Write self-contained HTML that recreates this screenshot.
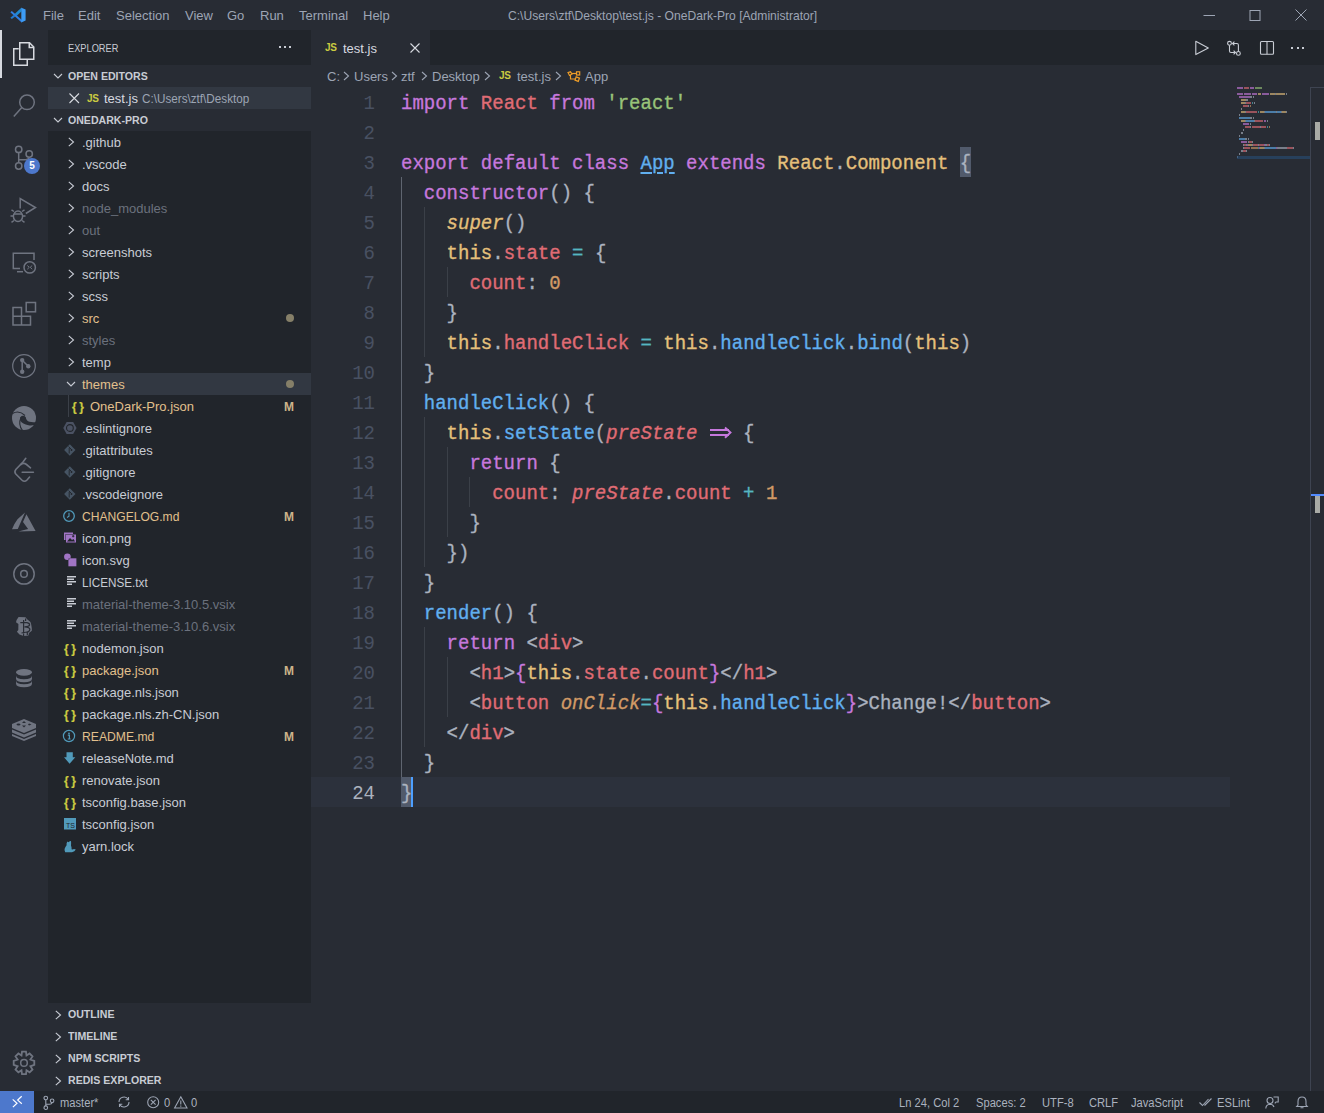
<!DOCTYPE html>
<html><head><meta charset="utf-8">
<style>
*{margin:0;padding:0;box-sizing:border-box}
html,body{width:1324px;height:1113px;overflow:hidden;background:#282c34;font-family:"Liberation Sans",sans-serif;position:relative}
.a{position:absolute}
svg{position:absolute;overflow:visible}
#title{left:0;top:0;width:1324px;height:30px;background:#282c34;color:#9da5b4;font-size:13px}
#title .m{position:absolute;top:1px;line-height:30px;white-space:nowrap}
#act{left:0;top:30px;width:48px;height:1061px;background:#282c34}
#side{left:48px;top:30px;width:263px;height:1061px;background:#21252b;color:#c8ccd4;font-size:13px;overflow:hidden}
#editor{left:311px;top:30px;width:1013px;height:1061px;background:#282c34;overflow:hidden}
#status{left:0;top:1091px;width:1324px;height:22px;background:#21252b;color:#abb2bf;font-size:12px}
#status .t{position:absolute;top:1px;transform:scaleX(0.93);transform-origin:0 0;line-height:22px;white-space:nowrap}
.row{position:absolute;left:0;width:263px;height:22px;line-height:22px;white-space:nowrap}
.row .t{position:absolute;top:1px}
.sh{position:absolute;left:0;width:263px;height:22px;line-height:22px;background:#282c34;font-weight:bold;font-size:11px;color:#c8ccd4;white-space:nowrap}
.sh .t{position:absolute;left:20px;top:0px;font-size:11.5px;transform:scaleX(0.92);transform-origin:0 0}
#code{position:absolute;left:90px;top:57px;width:830px;height:1004px}
.cl{position:absolute;left:0;height:30px;font-family:"Liberation Mono",monospace;font-size:20.5px;line-height:30px;white-space:pre;color:#abb2bf;-webkit-text-stroke:0.35px currentColor;transform:scaleX(0.92683);transform-origin:0 0}
.ln{position:absolute;left:0;width:64px;height:30px;text-align:right;font-family:"Liberation Mono",monospace;font-size:20.5px;line-height:30px;color:#495162;transform:scaleX(0.92683);transform-origin:100% 0}
.k{color:#c678dd}.r{color:#e06c75}.g{color:#98c379}.y{color:#e5c07b}.b{color:#61afef}.c{color:#56b6c2}.o{color:#d19a66}
.yi{color:#e5c07b;font-style:italic}.ri{color:#e06c75;font-style:italic}.oi{color:#d19a66;font-style:italic}
.bu{color:#61afef;text-decoration:underline;text-underline-offset:3px}
.bm{}
.bm2{}
.guide{position:absolute;width:1px;background:#3b4048}
.mm{position:absolute;height:2px}
.js{color:#cbcb41;font-weight:bold;font-size:10px;letter-spacing:-0.3px}
.brace{color:#cbcb41;font-weight:bold;font-size:12px;letter-spacing:2.5px;-webkit-text-stroke:0.2px #cbcb41}
.mm2{font-weight:bold;font-size:12px;color:#cdb48a}
.bc span{top:1px}
</style></head><body>
<div id="title" class="a">
  <svg style="left:10px;top:7px" width="16" height="16" viewBox="0 0 16 16">
    <path d="M11.6 0.6 L4.6 7.1 L6.6 8.9 L11.6 4.3 Z" fill="#1f8ad2"/>
    <path d="M0.4 5.3 L1.8 4.1 L12.2 13.2 L11.6 15.4 Z" fill="#2f80e6"/>
    <path d="M0.4 10.7 L3.6 8.1 L5.2 9.5 L1.8 11.9 Z" fill="#1f7bd0"/>
    <path d="M11.3 0.7 L15.6 2.6 L15.6 13.4 L11.3 15.4 Z" fill="#3d9cf5"/>
  </svg>
  <span class="m" style="left:43px">File</span>
  <span class="m" style="left:78px">Edit</span>
  <span class="m" style="left:116px">Selection</span>
  <span class="m" style="left:185px">View</span>
  <span class="m" style="left:227px">Go</span>
  <span class="m" style="left:260px">Run</span>
  <span class="m" style="left:299px">Terminal</span>
  <span class="m" style="left:363px">Help</span>
  <span class="m" id="ttl" style="left:508px;font-size:12.1px">C:\Users\ztf\Desktop\test.js - OneDark-Pro [Administrator]</span>
  <svg style="left:1203px;top:10px" width="12" height="12" viewBox="0 0 12 12"><path d="M0.5 5.5 H12" stroke="#9da5b4" stroke-width="1"/></svg>
  <svg style="left:1249px;top:10px" width="12" height="12" viewBox="0 0 12 12"><rect x="1" y="0.5" width="10" height="10" fill="none" stroke="#9da5b4" stroke-width="1"/></svg>
  <svg style="left:1295px;top:9px" width="12" height="12" viewBox="0 0 12 12"><path d="M0.5 0.5 L11.5 11.5 M11.5 0.5 L0.5 11.5" stroke="#9da5b4" stroke-width="1"/></svg>
</div>
<div id="act" class="a">
  <div class="a" style="left:0;top:0;width:2px;height:48px;background:#d7dae0"></div>
  <svg style="left:0;top:0" width="48" height="1061" viewBox="0 30 48 1061" fill="none" stroke="#6f7480" stroke-width="1.5">
    <!-- explorer -->
    <g stroke="#d7dae0">
      <path d="M18.75 48.75 H13.75 V65.25 H27.25 V59.75"/>
      <path d="M19.75 42.75 H29.5 L33.75 47 V59.25 H19.75 Z"/>
      <path d="M29.25 42.75 V47.5 H33.75"/>
    </g>
    <!-- search -->
    <circle cx="27" cy="102.3" r="7.3"/>
    <path d="M21.8 107.6 L13.8 116.6"/>
    <!-- scm -->
    <circle cx="18.7" cy="149.4" r="3.2"/>
    <circle cx="29.2" cy="154" r="3.2"/>
    <circle cx="18.7" cy="166" r="3.2"/>
    <path d="M18.7 152.6 V162.8 M29.2 157.2 Q29 159.5 24 159.7 H18.7"/>
    <!-- debug -->
    <path d="M20.2 208.5 V198.5 L35.5 207.5 L25.8 213.5"/>
    <ellipse cx="18" cy="216.3" rx="4.6" ry="5.2"/>
    <path d="M13.4 216 H10.5 M22.6 216 H25.5 M14 211.5 L11.5 209.8 M22 211.5 L24.5 209.8 M14 220.5 L11.5 222.3 M22 220.5 L24.5 222.3 M14 214 H22"/>
    <!-- remote -->
    <path d="M20 268.5 H13.3 V253.3 H34 V260"/>
    <path d="M17 271.7 H23"/>
    <circle cx="29.7" cy="267.4" r="5.7"/>
    <path d="M27.3 265.5 L29.3 267.3 L27.3 269.2 M32.2 265.5 L30.2 267.3 L32.2 269.2" stroke-width="1"/>
    <!-- extensions -->
    <path d="M13 307.5 H21.5 V325 H13 Z M13 316.3 H30.5 V325 H21.5"/>
    <rect x="26.2" y="302.5" width="9.3" height="9.3"/>
    <!-- git graph -->
    <circle cx="24" cy="366" r="11.3" stroke-width="1.2"/>
    <path d="M22.2 360.2 V371.7 M22.2 360.2 L28.3 366.3"/>
    <g fill="#6f7480" stroke="none"><circle cx="22.2" cy="360.1" r="2.2"/><circle cx="28.3" cy="366.3" r="2.2"/><circle cx="22.2" cy="371.7" r="2.2"/></g>
    <!-- edge -->
    <circle cx="24" cy="418" r="12" fill="#6f7480" stroke="none"/>
    <path fill="#282c34" stroke="none" d="M20.2 417.2 Q23 414.5 25.8 417.2 Q26.3 420.8 29.5 421.8 Q32.5 422.6 36.5 422 L36.5 424 Q33.5 426 28.5 425.3 Q22.5 424.3 20.2 420.5 Z"/>
    <path stroke="#282c34" stroke-width="1.1" d="M12.5 413.5 Q19 409.8 25 415.5 M21 417.5 Q17.8 424.5 22.5 430.5"/>
    <path fill="#282c34" stroke="none" d="M37 422 L37 427 Q35.5 424.8 33.5 424.4 Z"/>
    <!-- leetcode -->
    <path stroke-width="1.6" stroke-linecap="round" d="M25.8 458.3 L23.2 461.8 L15.8 469.5 Q14 471.8 15.8 474 L21.8 480 Q24.5 482.5 27 480 L29.6 477"/>
    <path stroke-width="1.6" stroke-linecap="round" d="M20.8 464.6 Q23.6 462.2 26.5 464.5 L30.5 467.8"/>
    <path stroke-width="1.6" stroke-linecap="round" d="M22.2 472.3 H33.4"/>
    <!-- azure -->
    <path fill="#6f7480" stroke="none" d="M25 512.6 L17.8 529 L12 529.3 Q14.5 523 17.5 519.2 Z M26.4 514.3 L35.6 531 L18.4 531.6 L23 530.2 L28.1 529 L23 522.1 Z"/>
    <!-- circle -->
    <circle cx="24" cy="573.9" r="10.2"/>
    <circle cx="24" cy="573.9" r="3.3"/>
    <!-- bitcoin -->
    <path fill="#6f7480" stroke="none" d="M18.6 616.9 L25.5 617.3 L27.4 619.4 Q30.5 621 31.2 624.5 L31.8 628.4 L31.8 630.7 L29 633 L28.4 635.5 L23.8 636 L19.5 634.4 L16.9 631.8 L18.3 630 L18.4 624 L16 622.2 L16.6 620 Z"/>
    <path stroke="#282c34" stroke-width="1.2" fill="none" d="M23.6 620 V636 M25.6 618.5 V621 M27.3 632 V635 M20.3 622.6 H27 Q29.8 623.2 29.6 625 Q29.2 626.6 24.5 626.8 Q30 627.2 29.9 629.3 Q29.5 631.8 27 632 L21.5 633"/>
    <!-- database -->
    <g fill="#6f7480" stroke="none">
      <ellipse cx="24" cy="672.3" rx="8" ry="3.4"/>
      <path d="M16 675.5 Q16 679.3 24 679.3 Q32 679.3 32 675.5 V678.5 Q32 682.3 24 682.3 Q16 682.3 16 678.5 Z"/>
      <path d="M16 680.5 Q16 684.3 24 684.3 Q32 684.3 32 680.5 V683.5 Q32 687.3 24 687.3 Q16 687.3 16 683.5 Z"/>
    </g>
    <!-- redis -->
    <g fill="#6f7480" stroke="none">
      <path d="M24 719 L36 724 V728 L24 733 L12 728 V724 Z"/>
      <path d="M12 729.5 L24 734.5 L36 729.5 V732.5 L24 737.5 L12 732.5 Z"/>
      <path d="M12 734 L24 739 L36 734 V736 L24 741 L12 736 Z"/>
    </g>
    <g fill="#282c34" stroke="none"><path d="M24 721 L26 723 H22 Z M24 727.5 L22 725.5 H26 Z"/><ellipse cx="18.5" cy="724.5" rx="2" ry="1"/><path d="M29 723.5 L31.5 724.5 L29 725.5 L28 724.5 Z"/></g>
    <!-- settings gear -->
    <path stroke-width="1.8" d="M22 1051.6 H26 L26.5 1055.5 L29.6 1053.5 L32.5 1056.4 L30.4 1059.5 L34.3 1060.9 V1064.9 L30.4 1066.3 L32.5 1069.5 L29.6 1072.3 L26.5 1070.3 L26 1074.2 H22 L21.5 1070.3 L18.4 1072.3 L15.5 1069.5 L17.6 1066.3 L13.7 1064.9 V1060.9 L17.6 1059.5 L15.5 1056.4 L18.4 1053.5 L21.5 1055.5 Z"/>
    <circle cx="24" cy="1062.9" r="3.3" stroke-width="1.5"/>
  </svg>
  <div class="a" style="left:24px;top:128px;width:16px;height:16px;border-radius:8px;background:#4d78cc;color:#fff;font-size:10px;font-weight:bold;line-height:16px;text-align:center">5</div>
</div>
<div id="side" class="a">
  <div class="a" style="left:0;top:0;width:263px;height:35px;background:#21252b"></div>
  <span class="a" style="left:20px;top:1px;line-height:35px;font-size:11px;color:#c8ccd4;transform:scaleX(0.84);transform-origin:0 0">EXPLORER</span>
  <div class="a" style="left:231px;top:16px;width:2px;height:2px;background:#c8ccd4"></div><div class="a" style="left:236px;top:16px;width:2px;height:2px;background:#c8ccd4"></div><div class="a" style="left:241px;top:16px;width:2px;height:2px;background:#c8ccd4"></div>
  <div class="sh" style="top:35px"><span class="t">OPEN EDITORS</span></div>
  <svg style="left:5px;top:41px" width="10" height="10" viewBox="0 0 10 10"><path d="M1 3 L5 7 L9 3" fill="none" stroke="#c8ccd4" stroke-width="1.1"/></svg>
  <div class="a" style="left:0;top:57px;width:263px;height:22px;background:#323842"></div>
  <svg style="left:21px;top:63px" width="11" height="11" viewBox="0 0 11 11"><path d="M0.5 0.5 L10 10 M10 0.5 L0.5 10" stroke="#d7dae0" stroke-width="1.1"/></svg>
  <div class="row" style="top:57px;color:#d7dae0"><span class="t js" style="left:39px">JS</span><span class="t" style="left:56px">test.js</span><span class="t" style="left:94px;font-size:12px;color:#9da5b4;transform:scaleX(0.975);transform-origin:0 0">C:\Users\ztf\Desktop</span></div>
  <div class="sh" style="top:79px"><span class="t">ONEDARK-PRO</span></div>
  <svg style="left:5px;top:85px" width="10" height="10" viewBox="0 0 10 10"><path d="M1 3 L5 7 L9 3" fill="none" stroke="#c8ccd4" stroke-width="1.1"/></svg>
  <svg style="left:20px;top:107px" width="10" height="10" viewBox="0 0 10 10"><path d="M0.8 0.8 L5.5 5 L0.8 9.2" fill="none" stroke="#c8ccd4" stroke-width="1.1"/></svg>
  <div class="row" style="top:101px;color:#c8ccd4"><span class="t" style="left:34px">.github</span></div>
  <svg style="left:20px;top:129px" width="10" height="10" viewBox="0 0 10 10"><path d="M0.8 0.8 L5.5 5 L0.8 9.2" fill="none" stroke="#c8ccd4" stroke-width="1.1"/></svg>
  <div class="row" style="top:123px;color:#c8ccd4"><span class="t" style="left:34px">.vscode</span></div>
  <svg style="left:20px;top:151px" width="10" height="10" viewBox="0 0 10 10"><path d="M0.8 0.8 L5.5 5 L0.8 9.2" fill="none" stroke="#c8ccd4" stroke-width="1.1"/></svg>
  <div class="row" style="top:145px;color:#c8ccd4"><span class="t" style="left:34px">docs</span></div>
  <svg style="left:20px;top:173px" width="10" height="10" viewBox="0 0 10 10"><path d="M0.8 0.8 L5.5 5 L0.8 9.2" fill="none" stroke="#c8ccd4" stroke-width="1.1"/></svg>
  <div class="row" style="top:167px;color:#6b717d"><span class="t" style="left:34px">node_modules</span></div>
  <svg style="left:20px;top:195px" width="10" height="10" viewBox="0 0 10 10"><path d="M0.8 0.8 L5.5 5 L0.8 9.2" fill="none" stroke="#c8ccd4" stroke-width="1.1"/></svg>
  <div class="row" style="top:189px;color:#6b717d"><span class="t" style="left:34px">out</span></div>
  <svg style="left:20px;top:217px" width="10" height="10" viewBox="0 0 10 10"><path d="M0.8 0.8 L5.5 5 L0.8 9.2" fill="none" stroke="#c8ccd4" stroke-width="1.1"/></svg>
  <div class="row" style="top:211px;color:#c8ccd4"><span class="t" style="left:34px">screenshots</span></div>
  <svg style="left:20px;top:239px" width="10" height="10" viewBox="0 0 10 10"><path d="M0.8 0.8 L5.5 5 L0.8 9.2" fill="none" stroke="#c8ccd4" stroke-width="1.1"/></svg>
  <div class="row" style="top:233px;color:#c8ccd4"><span class="t" style="left:34px">scripts</span></div>
  <svg style="left:20px;top:261px" width="10" height="10" viewBox="0 0 10 10"><path d="M0.8 0.8 L5.5 5 L0.8 9.2" fill="none" stroke="#c8ccd4" stroke-width="1.1"/></svg>
  <div class="row" style="top:255px;color:#c8ccd4"><span class="t" style="left:34px">scss</span></div>
  <svg style="left:20px;top:283px" width="10" height="10" viewBox="0 0 10 10"><path d="M0.8 0.8 L5.5 5 L0.8 9.2" fill="none" stroke="#c8ccd4" stroke-width="1.1"/></svg>
  <div class="row" style="top:277px;color:#e2c08d"><span class="t" style="left:34px">src</span></div>
  <div class="a" style="left:238px;top:284px;width:8px;height:8px;border-radius:4px;background:#857f68"></div>
  <svg style="left:20px;top:305px" width="10" height="10" viewBox="0 0 10 10"><path d="M0.8 0.8 L5.5 5 L0.8 9.2" fill="none" stroke="#c8ccd4" stroke-width="1.1"/></svg>
  <div class="row" style="top:299px;color:#6b717d"><span class="t" style="left:34px">styles</span></div>
  <svg style="left:20px;top:327px" width="10" height="10" viewBox="0 0 10 10"><path d="M0.8 0.8 L5.5 5 L0.8 9.2" fill="none" stroke="#c8ccd4" stroke-width="1.1"/></svg>
  <div class="row" style="top:321px;color:#c8ccd4"><span class="t" style="left:34px">temp</span></div>
  <div class="a" style="left:0;top:343px;width:263px;height:22px;background:#323842"></div>
  <svg style="left:18px;top:349px" width="10" height="10" viewBox="0 0 10 10"><path d="M1 3 L5 7 L9 3" fill="none" stroke="#c8ccd4" stroke-width="1.1"/></svg>
  <div class="row" style="top:343px;color:#e2c08d"><span class="t" style="left:34px">themes</span></div>
  <div class="a" style="left:238px;top:350px;width:8px;height:8px;border-radius:4px;background:#857f68"></div>
  <div class="a" style="left:20px;top:365px;width:1px;height:22px;background:#3b4048"></div>
  <div class="row" style="top:365px;color:#e2c08d"><span class="t brace" style="left:24px">{}</span><span class="t" style="left:42px">OneDark-Pro.json</span><span class="t mm2" style="left:236px">M</span></div>
  <svg style="left:14px;top:391px" width="16" height="14" viewBox="0 0 16 14"><path d="M1.25 7 L4.6 1.1 H11.2 L14.55 7 L11.2 12.9 H4.6 Z" fill="#4b5263"/><circle cx="7.9" cy="7" r="3.4" fill="none" stroke="#21252b" stroke-width="1.1"/></svg>
  <div class="row" style="top:387px;color:#c8ccd4"><span class="t" style="left:34px">.eslintignore</span></div>
  <svg style="left:14px;top:413px" width="16" height="14" viewBox="0 0 16 14"><path d="M7.8 1.3 L13.5 7 L7.8 12.7 L2.1 7 Z" fill="#465463"/><path d="M6.5 3.5 L9.2 6.2 M7.2 5 V10.5" stroke="#21252b" stroke-width="0.9" fill="none"/><circle cx="9.5" cy="7" r="0.9" fill="#21252b"/></svg>
  <div class="row" style="top:409px;color:#c8ccd4"><span class="t" style="left:34px">.gitattributes</span></div>
  <svg style="left:14px;top:435px" width="16" height="14" viewBox="0 0 16 14"><path d="M7.8 1.3 L13.5 7 L7.8 12.7 L2.1 7 Z" fill="#465463"/><path d="M6.5 3.5 L9.2 6.2 M7.2 5 V10.5" stroke="#21252b" stroke-width="0.9" fill="none"/><circle cx="9.5" cy="7" r="0.9" fill="#21252b"/></svg>
  <div class="row" style="top:431px;color:#c8ccd4"><span class="t" style="left:34px">.gitignore</span></div>
  <svg style="left:14px;top:457px" width="16" height="14" viewBox="0 0 16 14"><path d="M7.8 1.3 L13.5 7 L7.8 12.7 L2.1 7 Z" fill="#465463"/><path d="M6.5 3.5 L9.2 6.2 M7.2 5 V10.5" stroke="#21252b" stroke-width="0.9" fill="none"/><circle cx="9.5" cy="7" r="0.9" fill="#21252b"/></svg>
  <div class="row" style="top:453px;color:#c8ccd4"><span class="t" style="left:34px">.vscodeignore</span></div>
  <svg style="left:14px;top:479px" width="14" height="14" viewBox="0 0 14 14"><circle cx="7" cy="7" r="5.3" fill="none" stroke="#519aba" stroke-width="1.3"/><path d="M7 3.8 V7.3 L5 8.5" fill="none" stroke="#519aba" stroke-width="1.1"/></svg>
  <div class="row" style="top:475px;color:#e2c08d"><span class="t" style="left:34px;transform:scaleX(0.93);transform-origin:0 0">CHANGELOG.md</span><span class="t mm2" style="left:236px">M</span></div>
  <svg style="left:15px;top:501px" width="14" height="14" viewBox="0 0 14 14"><path d="M1 1.5 H10 V3 H2.5 V9 H1 Z" fill="#a074c4"/><rect x="3" y="3.5" width="10" height="8" fill="#a074c4"/><path d="M4 10.5 L7 7 L9 9 L10.5 8 L12 10.5 Z" fill="#21252b"/><path d="M10.2 4 V6.4 M9 5.2 H11.4" stroke="#21252b" stroke-width="0.9"/></svg>
  <div class="row" style="top:497px;color:#c8ccd4"><span class="t" style="left:34px">icon.png</span></div>
  <svg style="left:15px;top:523px" width="14" height="14" viewBox="0 0 14 14"><circle cx="4.4" cy="3.8" r="3.3" fill="#a074c4"/><rect x="5.4" y="5.3" width="8" height="8" fill="#a074c4"/><path d="M5.4 5.3 H7.2 A3.3 3.3 0 0 1 5.4 7.3 Z" fill="#21252b" opacity="0.5"/></svg>
  <div class="row" style="top:519px;color:#c8ccd4"><span class="t" style="left:34px">icon.svg</span></div>
  <svg style="left:18px;top:545px" width="12" height="12" viewBox="0 0 12 12"><path d="M1 1.8 H10 M1 4.3 H8 M1 6.8 H10 M1 9.3 H6" stroke="#c8ccd4" stroke-width="1.5"/></svg>
  <div class="row" style="top:541px;color:#c8ccd4"><span class="t" style="left:34px;transform:scaleX(0.9);transform-origin:0 0">LICENSE.txt</span></div>
  <svg style="left:18px;top:567px" width="12" height="12" viewBox="0 0 12 12"><path d="M1 1.8 H10 M1 4.3 H8 M1 6.8 H10 M1 9.3 H6" stroke="#c8ccd4" stroke-width="1.5"/></svg>
  <div class="row" style="top:563px;color:#6b717d"><span class="t" style="left:34px">material-theme-3.10.5.vsix</span></div>
  <svg style="left:18px;top:589px" width="12" height="12" viewBox="0 0 12 12"><path d="M1 1.8 H10 M1 4.3 H8 M1 6.8 H10 M1 9.3 H6" stroke="#c8ccd4" stroke-width="1.5"/></svg>
  <div class="row" style="top:585px;color:#6b717d"><span class="t" style="left:34px">material-theme-3.10.6.vsix</span></div>
  <div class="row" style="top:607px;color:#c8ccd4"><span class="t brace" style="left:16px">{}</span><span class="t" style="left:34px">nodemon.json</span></div>
  <div class="row" style="top:629px;color:#e2c08d"><span class="t brace" style="left:16px">{}</span><span class="t" style="left:34px">package.json</span><span class="t mm2" style="left:236px">M</span></div>
  <div class="row" style="top:651px;color:#c8ccd4"><span class="t brace" style="left:16px">{}</span><span class="t" style="left:34px">package.nls.json</span></div>
  <div class="row" style="top:673px;color:#c8ccd4"><span class="t brace" style="left:16px">{}</span><span class="t" style="left:34px">package.nls.zh-CN.json</span></div>
  <svg style="left:14px;top:699px" width="14" height="14" viewBox="0 0 14 14"><circle cx="7" cy="7" r="5.6" fill="none" stroke="#519aba" stroke-width="1.2"/><circle cx="7" cy="4.3" r="0.9" fill="#519aba"/><path d="M5.8 6.2 H7.4 V9.8 M5.8 10 H8.6" stroke="#519aba" stroke-width="1.2" fill="none"/></svg>
  <div class="row" style="top:695px;color:#e2c08d"><span class="t" style="left:34px;transform:scaleX(0.935);transform-origin:0 0">README.md</span><span class="t mm2" style="left:236px">M</span></div>
  <svg style="left:15px;top:721px" width="14" height="14" viewBox="0 0 14 14"><path d="M3.5 1.3 H9.8 V6.2 H12.3 L6.6 12.8 L1 6.2 H3.5 Z" fill="#519aba"/></svg>
  <div class="row" style="top:717px;color:#c8ccd4"><span class="t" style="left:34px">releaseNote.md</span></div>
  <div class="row" style="top:739px;color:#c8ccd4"><span class="t brace" style="left:16px">{}</span><span class="t" style="left:34px">renovate.json</span></div>
  <div class="row" style="top:761px;color:#c8ccd4"><span class="t brace" style="left:16px">{}</span><span class="t" style="left:34px">tsconfig.base.json</span></div>
  <svg style="left:16px;top:787px" width="14" height="14" viewBox="0 0 14 14"><rect x="0" y="1" width="12" height="11.5" fill="#519aba"/><text x="2" y="11" font-family="Liberation Sans" font-size="7" fill="#21252b">TS</text></svg>
  <div class="row" style="top:783px;color:#c8ccd4"><span class="t" style="left:34px">tsconfig.json</span></div>
  <svg style="left:15px;top:809px" width="14" height="14" viewBox="0 0 14 14"><path d="M4.3 2.5 L5.3 3.3 L6.8 2.2 L8 2 Q8.3 4.5 8 6.5 Q8.8 8.5 8.6 10.3 Q10 10.6 11 10.1 L12.8 10.4 Q11.8 12.6 9 13.2 H2.2 Q0.9 11.5 1.8 9.2 Q2.8 7.2 3.6 6.3 Q3.2 4.5 4.3 2.5 Z" fill="#519aba"/></svg>
  <div class="row" style="top:805px;color:#c8ccd4"><span class="t" style="left:34px">yarn.lock</span></div>
  <div class="sh" style="top:973px"><span class="t">OUTLINE</span></div>
  <div class="sh" style="top:995px"><span class="t">TIMELINE</span></div>
  <div class="sh" style="top:1017px"><span class="t">NPM SCRIPTS</span></div>
  <div class="sh" style="top:1039px"><span class="t">REDIS EXPLORER</span></div>
  <svg style="left:7px;top:980px" width="10" height="10" viewBox="0 0 10 10"><path d="M0.8 0.8 L5.5 5 L0.8 9.2" fill="none" stroke="#c8ccd4" stroke-width="1.1"/></svg>
  <svg style="left:7px;top:1002px" width="10" height="10" viewBox="0 0 10 10"><path d="M0.8 0.8 L5.5 5 L0.8 9.2" fill="none" stroke="#c8ccd4" stroke-width="1.1"/></svg>
  <svg style="left:7px;top:1024px" width="10" height="10" viewBox="0 0 10 10"><path d="M0.8 0.8 L5.5 5 L0.8 9.2" fill="none" stroke="#c8ccd4" stroke-width="1.1"/></svg>
  <svg style="left:7px;top:1046px" width="10" height="10" viewBox="0 0 10 10"><path d="M0.8 0.8 L5.5 5 L0.8 9.2" fill="none" stroke="#c8ccd4" stroke-width="1.1"/></svg>
</div>
<div id="editor" class="a">
  <div class="a" style="left:0;top:0;width:1013px;height:35px;background:#21252b"></div>
  <div class="a" style="left:0;top:0;width:119px;height:35px;background:#282c34"></div>
  <span class="a js" style="left:14px;top:0;line-height:35px">JS</span>
  <span class="a" style="left:32px;top:1px;line-height:35px;font-size:13px;color:#d7dae0">test.js</span>
  <svg style="left:99px;top:13px" width="10" height="10" viewBox="0 0 10 10"><path d="M0.5 0.5 L9.5 9.5 M9.5 0.5 L0.5 9.5" stroke="#d7dae0" stroke-width="1.1"/></svg>
  <svg style="left:883px;top:10px" width="16" height="16" viewBox="0 0 16 16"><path d="M1.8 1.2 L14.3 7.9 L1.8 14.6 Z" fill="none" stroke="#c8ccd4" stroke-width="1.1" stroke-linejoin="round"/></svg>
  <svg style="left:915px;top:10px" width="16" height="16" viewBox="0 0 16 16" fill="none" stroke="#c8ccd4" stroke-width="1.1"><circle cx="3.5" cy="3.3" r="1.9"/><circle cx="12.4" cy="13.4" r="1.9"/><path d="M3.5 5.2 V11 Q3.5 12.5 5 12.5 H9.5 M7.6 10.6 L9.5 12.5 L7.6 14.4"/><path d="M12.4 11.5 V5 Q12.4 3.5 10.9 3.5 H6.5 M8.4 1.6 L6.5 3.5 L8.4 5.4"/></svg>
  <svg style="left:948px;top:11px" width="16" height="14" viewBox="0 0 16 14" fill="none" stroke="#c8ccd4" stroke-width="1.1"><rect x="1.5" y="0.5" width="13" height="12.8" rx="1"/><path d="M8 0.5 V13.3"/></svg>
  <div class="a" style="left:980px;top:17px;width:2px;height:2px;background:#c8ccd4"></div>
  <div class="a" style="left:986px;top:17px;width:2px;height:2px;background:#c8ccd4"></div>
  <div class="a" style="left:991px;top:17px;width:2px;height:2px;background:#c8ccd4"></div>
  <div class="a bc" style="left:0;top:35px;width:1013px;height:22px;font-size:13px;line-height:22px;color:#9da5b4">
    <span class="a" style="left:16px">C:</span>
    <span class="a" style="left:43px">Users</span>
    <span class="a" style="left:90px">ztf</span>
    <span class="a" style="left:121px">Desktop</span>
    <span class="a js" style="left:188px;top:0">JS</span>
    <span class="a" style="left:206px">test.js</span>
    <span class="a" style="left:274px">App</span>
  </div>
  <svg style="left:32px;top:41px" width="7" height="10" viewBox="0 0 7 10"><path d="M1 1 L5.5 5 L1 9" fill="none" stroke="#9da5b4" stroke-width="1.1"/></svg><svg style="left:80px;top:41px" width="7" height="10" viewBox="0 0 7 10"><path d="M1 1 L5.5 5 L1 9" fill="none" stroke="#9da5b4" stroke-width="1.1"/></svg><svg style="left:110px;top:41px" width="7" height="10" viewBox="0 0 7 10"><path d="M1 1 L5.5 5 L1 9" fill="none" stroke="#9da5b4" stroke-width="1.1"/></svg><svg style="left:173px;top:41px" width="7" height="10" viewBox="0 0 7 10"><path d="M1 1 L5.5 5 L1 9" fill="none" stroke="#9da5b4" stroke-width="1.1"/></svg><svg style="left:244px;top:41px" width="7" height="10" viewBox="0 0 7 10"><path d="M1 1 L5.5 5 L1 9" fill="none" stroke="#9da5b4" stroke-width="1.1"/></svg>
  <svg style="left:256px;top:41px" width="14" height="12" viewBox="0 0 14 12" fill="none" stroke="#ee9d28" stroke-width="1.2"><path d="M1 1.5 L3.5 0.8 L5 3 L2.5 4.5 Z M3.5 3.5 V8 H8"/><rect x="8.5" y="6.3" width="3.5" height="3.5" transform="rotate(20 10 8)"/><path d="M5 2.5 H9.5"/><rect x="9.5" y="0.8" width="3.2" height="3.2"/></svg>
  <div class="a" style="left:0;top:747px;width:919px;height:30px;background:#2c313c"></div>
  <div class="a" style="left:649px;top:117px;width:11px;height:30px;background:#515a6b"></div>
  <div class="a" style="left:90px;top:747px;width:10px;height:30px;background:#515a6b"></div>
  <div class="a" style="left:100px;top:747px;width:2px;height:30px;background:#4d9fff"></div>
  <svg style="left:399px;top:397px" width="22" height="13" viewBox="0 0 22 13" fill="none" stroke="#c678dd" stroke-width="1.9"><path d="M0 3 H19 M0 8 H19 M15 0.5 L20.5 5.5 L15 10.8"/></svg>
  <div class="ln" style="top:59px;color:#495162">1</div>
  <div class="ln" style="top:89px;color:#495162">2</div>
  <div class="ln" style="top:119px;color:#495162">3</div>
  <div class="ln" style="top:149px;color:#495162">4</div>
  <div class="ln" style="top:179px;color:#495162">5</div>
  <div class="ln" style="top:209px;color:#495162">6</div>
  <div class="ln" style="top:239px;color:#495162">7</div>
  <div class="ln" style="top:269px;color:#495162">8</div>
  <div class="ln" style="top:299px;color:#495162">9</div>
  <div class="ln" style="top:329px;color:#495162">10</div>
  <div class="ln" style="top:359px;color:#495162">11</div>
  <div class="ln" style="top:389px;color:#495162">12</div>
  <div class="ln" style="top:419px;color:#495162">13</div>
  <div class="ln" style="top:449px;color:#495162">14</div>
  <div class="ln" style="top:479px;color:#495162">15</div>
  <div class="ln" style="top:509px;color:#495162">16</div>
  <div class="ln" style="top:539px;color:#495162">17</div>
  <div class="ln" style="top:569px;color:#495162">18</div>
  <div class="ln" style="top:599px;color:#495162">19</div>
  <div class="ln" style="top:629px;color:#495162">20</div>
  <div class="ln" style="top:659px;color:#495162">21</div>
  <div class="ln" style="top:689px;color:#495162">22</div>
  <div class="ln" style="top:719px;color:#495162">23</div>
  <div class="ln" style="top:749px;color:#abb2bf">24</div>
  <div class="guide" style="left:90.0px;top:147px;height:600px;background:#5f6570"></div>
  <div class="guide" style="left:112.8px;top:177px;height:150px;"></div>
  <div class="guide" style="left:112.8px;top:387px;height:150px;"></div>
  <div class="guide" style="left:112.8px;top:597px;height:120px;"></div>
  <div class="guide" style="left:135.6px;top:237px;height:30px;"></div>
  <div class="guide" style="left:135.6px;top:417px;height:90px;"></div>
  <div class="guide" style="left:135.6px;top:627px;height:60px;"></div>
  <div class="guide" style="left:158.4px;top:447px;height:30px;"></div>
  <div id="code" style="top:59px">
  <div class="cl" style="top:0px"><span class="k">import</span> <span class="r">React</span> <span class="k">from</span> <span class="g">&#x27;react&#x27;</span></div>
  <div class="cl" style="top:30px"></div>
  <div class="cl" style="top:60px"><span class="k">export</span> <span class="k">default</span> <span class="k">class</span> <span class="bu">App</span> <span class="k">extends</span> <span class="y">React</span>.<span class="y">Component</span> <span class="bm">{</span></div>
  <div class="cl" style="top:90px">  <span class="k">constructor</span>() {</div>
  <div class="cl" style="top:120px">    <span class="yi">super</span>()</div>
  <div class="cl" style="top:150px">    <span class="y">this</span>.<span class="r">state</span> <span class="c">=</span> {</div>
  <div class="cl" style="top:180px">      <span class="r">count</span>: <span class="o">0</span></div>
  <div class="cl" style="top:210px">    }</div>
  <div class="cl" style="top:240px">    <span class="y">this</span>.<span class="r">handleClick</span> <span class="c">=</span> <span class="y">this</span>.<span class="b">handleClick</span>.<span class="b">bind</span>(<span class="y">this</span>)</div>
  <div class="cl" style="top:270px">  }</div>
  <div class="cl" style="top:300px">  <span class="b">handleClick</span>() {</div>
  <div class="cl" style="top:330px">    <span class="y">this</span>.<span class="b">setState</span>(<span class="ri">preState</span>    {</div>
  <div class="cl" style="top:360px">      <span class="k">return</span> {</div>
  <div class="cl" style="top:390px">        <span class="r">count</span>: <span class="ri">preState</span>.<span class="r">count</span> <span class="c">+</span> <span class="o">1</span></div>
  <div class="cl" style="top:420px">      }</div>
  <div class="cl" style="top:450px">    })</div>
  <div class="cl" style="top:480px">  }</div>
  <div class="cl" style="top:510px">  <span class="b">render</span>() {</div>
  <div class="cl" style="top:540px">    <span class="k">return</span> &lt;<span class="r">div</span>&gt;</div>
  <div class="cl" style="top:570px">      &lt;<span class="r">h1</span>&gt;<span class="k">{</span><span class="y">this</span>.<span class="r">state</span>.<span class="r">count</span><span class="k">}</span>&lt;/<span class="r">h1</span>&gt;</div>
  <div class="cl" style="top:600px">      &lt;<span class="r">button</span> <span class="oi">onClick</span><span class="c">=</span><span class="k">{</span><span class="y">this</span>.<span class="b">handleClick</span><span class="k">}</span>&gt;Change!&lt;/<span class="r">button</span>&gt;</div>
  <div class="cl" style="top:630px">    &lt;/<span class="r">div</span>&gt;</div>
  <div class="cl" style="top:660px">  }</div>
  <div class="cl" style="top:690px"><span class="bm2">}</span></div>
  </div>
  <div class="a" style="left:926px;top:57px;width:80px;height:80px;opacity:0.62">
  <div class="mm" style="left:0px;top:0px;width:6px;background:#c678dd"></div>
  <div class="mm" style="left:7px;top:0px;width:5px;background:#e06c75"></div>
  <div class="mm" style="left:13px;top:0px;width:4px;background:#c678dd"></div>
  <div class="mm" style="left:18px;top:0px;width:7px;background:#98c379"></div>
  <div class="mm" style="left:0px;top:6px;width:6px;background:#c678dd"></div>
  <div class="mm" style="left:7px;top:6px;width:7px;background:#c678dd"></div>
  <div class="mm" style="left:15px;top:6px;width:5px;background:#c678dd"></div>
  <div class="mm" style="left:21px;top:6px;width:3px;background:#e5c07b"></div>
  <div class="mm" style="left:25px;top:6px;width:7px;background:#c678dd"></div>
  <div class="mm" style="left:33px;top:6px;width:5px;background:#e5c07b"></div>
  <div class="mm" style="left:38px;top:6px;width:1px;background:#abb2bf"></div>
  <div class="mm" style="left:39px;top:6px;width:9px;background:#e5c07b"></div>
  <div class="mm" style="left:49px;top:6px;width:1px;background:#abb2bf"></div>
  <div class="mm" style="left:2px;top:9px;width:11px;background:#c678dd"></div>
  <div class="mm" style="left:13px;top:9px;width:2px;background:#abb2bf"></div>
  <div class="mm" style="left:16px;top:9px;width:1px;background:#abb2bf"></div>
  <div class="mm" style="left:4px;top:12px;width:5px;background:#e5c07b"></div>
  <div class="mm" style="left:9px;top:12px;width:2px;background:#abb2bf"></div>
  <div class="mm" style="left:4px;top:15px;width:4px;background:#e5c07b"></div>
  <div class="mm" style="left:8px;top:15px;width:1px;background:#abb2bf"></div>
  <div class="mm" style="left:9px;top:15px;width:5px;background:#e06c75"></div>
  <div class="mm" style="left:15px;top:15px;width:1px;background:#56b6c2"></div>
  <div class="mm" style="left:17px;top:15px;width:1px;background:#abb2bf"></div>
  <div class="mm" style="left:6px;top:18px;width:5px;background:#e06c75"></div>
  <div class="mm" style="left:11px;top:18px;width:1px;background:#abb2bf"></div>
  <div class="mm" style="left:13px;top:18px;width:1px;background:#d19a66"></div>
  <div class="mm" style="left:4px;top:21px;width:1px;background:#abb2bf"></div>
  <div class="mm" style="left:4px;top:24px;width:4px;background:#e5c07b"></div>
  <div class="mm" style="left:8px;top:24px;width:1px;background:#abb2bf"></div>
  <div class="mm" style="left:9px;top:24px;width:11px;background:#e06c75"></div>
  <div class="mm" style="left:21px;top:24px;width:1px;background:#56b6c2"></div>
  <div class="mm" style="left:23px;top:24px;width:4px;background:#e5c07b"></div>
  <div class="mm" style="left:27px;top:24px;width:1px;background:#abb2bf"></div>
  <div class="mm" style="left:28px;top:24px;width:11px;background:#61afef"></div>
  <div class="mm" style="left:39px;top:24px;width:1px;background:#abb2bf"></div>
  <div class="mm" style="left:40px;top:24px;width:4px;background:#61afef"></div>
  <div class="mm" style="left:44px;top:24px;width:1px;background:#abb2bf"></div>
  <div class="mm" style="left:45px;top:24px;width:4px;background:#e5c07b"></div>
  <div class="mm" style="left:49px;top:24px;width:1px;background:#abb2bf"></div>
  <div class="mm" style="left:2px;top:27px;width:1px;background:#abb2bf"></div>
  <div class="mm" style="left:2px;top:30px;width:11px;background:#61afef"></div>
  <div class="mm" style="left:13px;top:30px;width:2px;background:#abb2bf"></div>
  <div class="mm" style="left:16px;top:30px;width:1px;background:#abb2bf"></div>
  <div class="mm" style="left:4px;top:33px;width:4px;background:#e5c07b"></div>
  <div class="mm" style="left:8px;top:33px;width:1px;background:#abb2bf"></div>
  <div class="mm" style="left:9px;top:33px;width:8px;background:#61afef"></div>
  <div class="mm" style="left:17px;top:33px;width:1px;background:#abb2bf"></div>
  <div class="mm" style="left:18px;top:33px;width:8px;background:#e06c75"></div>
  <div class="mm" style="left:30px;top:33px;width:1px;background:#abb2bf"></div>
  <div class="mm" style="left:6px;top:36px;width:6px;background:#c678dd"></div>
  <div class="mm" style="left:13px;top:36px;width:1px;background:#abb2bf"></div>
  <div class="mm" style="left:8px;top:39px;width:5px;background:#e06c75"></div>
  <div class="mm" style="left:13px;top:39px;width:1px;background:#abb2bf"></div>
  <div class="mm" style="left:15px;top:39px;width:8px;background:#e06c75"></div>
  <div class="mm" style="left:23px;top:39px;width:1px;background:#abb2bf"></div>
  <div class="mm" style="left:24px;top:39px;width:5px;background:#e06c75"></div>
  <div class="mm" style="left:30px;top:39px;width:1px;background:#56b6c2"></div>
  <div class="mm" style="left:32px;top:39px;width:1px;background:#d19a66"></div>
  <div class="mm" style="left:6px;top:42px;width:1px;background:#abb2bf"></div>
  <div class="mm" style="left:4px;top:45px;width:2px;background:#abb2bf"></div>
  <div class="mm" style="left:2px;top:48px;width:1px;background:#abb2bf"></div>
  <div class="mm" style="left:2px;top:51px;width:6px;background:#61afef"></div>
  <div class="mm" style="left:8px;top:51px;width:2px;background:#abb2bf"></div>
  <div class="mm" style="left:11px;top:51px;width:1px;background:#abb2bf"></div>
  <div class="mm" style="left:4px;top:54px;width:6px;background:#c678dd"></div>
  <div class="mm" style="left:11px;top:54px;width:1px;background:#abb2bf"></div>
  <div class="mm" style="left:12px;top:54px;width:3px;background:#e06c75"></div>
  <div class="mm" style="left:15px;top:54px;width:1px;background:#abb2bf"></div>
  <div class="mm" style="left:6px;top:57px;width:1px;background:#abb2bf"></div>
  <div class="mm" style="left:7px;top:57px;width:2px;background:#e06c75"></div>
  <div class="mm" style="left:9px;top:57px;width:1px;background:#abb2bf"></div>
  <div class="mm" style="left:10px;top:57px;width:1px;background:#c678dd"></div>
  <div class="mm" style="left:11px;top:57px;width:4px;background:#e5c07b"></div>
  <div class="mm" style="left:15px;top:57px;width:1px;background:#abb2bf"></div>
  <div class="mm" style="left:16px;top:57px;width:5px;background:#e06c75"></div>
  <div class="mm" style="left:21px;top:57px;width:1px;background:#abb2bf"></div>
  <div class="mm" style="left:22px;top:57px;width:5px;background:#e06c75"></div>
  <div class="mm" style="left:27px;top:57px;width:1px;background:#c678dd"></div>
  <div class="mm" style="left:28px;top:57px;width:2px;background:#abb2bf"></div>
  <div class="mm" style="left:30px;top:57px;width:2px;background:#e06c75"></div>
  <div class="mm" style="left:32px;top:57px;width:1px;background:#abb2bf"></div>
  <div class="mm" style="left:6px;top:60px;width:1px;background:#abb2bf"></div>
  <div class="mm" style="left:7px;top:60px;width:6px;background:#e06c75"></div>
  <div class="mm" style="left:14px;top:60px;width:7px;background:#d19a66"></div>
  <div class="mm" style="left:21px;top:60px;width:1px;background:#56b6c2"></div>
  <div class="mm" style="left:22px;top:60px;width:1px;background:#c678dd"></div>
  <div class="mm" style="left:23px;top:60px;width:4px;background:#e5c07b"></div>
  <div class="mm" style="left:27px;top:60px;width:1px;background:#abb2bf"></div>
  <div class="mm" style="left:28px;top:60px;width:11px;background:#61afef"></div>
  <div class="mm" style="left:39px;top:60px;width:1px;background:#c678dd"></div>
  <div class="mm" style="left:40px;top:60px;width:10px;background:#abb2bf"></div>
  <div class="mm" style="left:50px;top:60px;width:6px;background:#e06c75"></div>
  <div class="mm" style="left:56px;top:60px;width:1px;background:#abb2bf"></div>
  <div class="mm" style="left:4px;top:63px;width:2px;background:#abb2bf"></div>
  <div class="mm" style="left:6px;top:63px;width:3px;background:#e06c75"></div>
  <div class="mm" style="left:9px;top:63px;width:1px;background:#abb2bf"></div>
  <div class="mm" style="left:2px;top:66px;width:1px;background:#abb2bf"></div>
  <div class="mm" style="left:0px;top:69px;width:1px;background:#abb2bf"></div>
  </div>
  <div class="a" style="left:926px;top:126px;width:73px;height:3px;background:#264f78;opacity:0.6"></div>
  <div class="a" style="left:999px;top:57px;width:1px;height:1004px;background:#3e4451"></div>
  <div class="a" style="left:999px;top:57px;width:14px;height:1px;background:#3e4451"></div>
  <div class="a" style="left:953px;top:90px;width:2px;height:2px;background:#c678dd;opacity:0.6"></div>
  <div class="a" style="left:1004px;top:92px;width:5px;height:18px;background:#a9aba6"></div>
  <div class="a" style="left:1000px;top:464px;width:13px;height:2px;background:#528bff"></div>
  <div class="a" style="left:1004px;top:466px;width:5px;height:17px;background:#a9aba6"></div>
</div>
<div id="status" class="a">
  <div class="a" style="left:0;top:0;width:34px;height:22px;background:#4d78cc"></div>
  <svg style="left:12px;top:5px" width="11" height="12" viewBox="0 0 11 12" fill="none" stroke="#fff" stroke-width="1.2"><path d="M0.7 3.4 L5 7.2 L0.9 11.1 M9.7 0.2 L5.7 4.1 L9.8 7.7"/></svg>
  <svg style="left:43px;top:5px" width="12" height="13" viewBox="0 0 12 13" fill="none" stroke="#9da5b4" stroke-width="1.1"><circle cx="2.8" cy="2" r="1.8"/><circle cx="2.8" cy="11.7" r="1.8"/><circle cx="9.1" cy="4.8" r="1.8"/><path d="M2.8 3.8 V9.9 M9.1 6.6 Q8.6 8.3 6.5 8.3 H2.8"/></svg>
  <span class="t" style="left:60px">master*</span>
  <svg style="left:117px;top:5px" width="14" height="12" viewBox="0 0 14 12" fill="none" stroke="#9da5b4" stroke-width="1.1"><path d="M2 6 A5 5 0 0 1 11.3 3.5 M12 6 A5 5 0 0 1 2.7 8.5 M11.5 1 V3.8 H8.7 M2.5 11 V8.2 H5.3"/></svg>
  <svg style="left:147px;top:5px" width="13" height="13" viewBox="0 0 13 13" fill="none" stroke="#9da5b4" stroke-width="1.1"><circle cx="6.2" cy="6.2" r="5.5"/><path d="M3.8 3.8 L8.6 8.6 M8.6 3.8 L3.8 8.6"/></svg>
  <span class="t" style="left:164px">0</span>
  <svg style="left:174px;top:5px" width="14" height="13" viewBox="0 0 14 13" fill="none" stroke="#9da5b4" stroke-width="1.1"><path d="M6.8 0.8 L13 12 H0.6 Z M6.8 4.5 V8.5 M6.8 9.6 V10.8"/></svg>
  <span class="t" style="left:191px">0</span>
  <span class="t" style="left:899px">Ln 24, Col 2</span>
  <span class="t" style="left:976px">Spaces: 2</span>
  <span class="t" style="left:1042px">UTF-8</span>
  <span class="t" style="left:1089px">CRLF</span>
  <span class="t" style="left:1131px">JavaScript</span>
  <svg style="left:1199px;top:7px" width="14" height="9" viewBox="0 0 14 9" fill="none" stroke="#9da5b4" stroke-width="1.1"><path d="M0.5 4.5 L3.5 7.5 L9.5 1 M5.5 7.5 L12.5 0.5"/></svg>
  <span class="t" style="left:1217px">ESLint</span>
  <svg style="left:1265px;top:5px" width="14" height="13" viewBox="0 0 14 13" fill="none" stroke="#9da5b4" stroke-width="1.1"><circle cx="5" cy="4.5" r="3"/><path d="M0.8 12.5 Q1 8.5 5 8.2 Q8 8.2 9 11 M8.5 1 H13.2 V6 H11 L9.8 7.3"/></svg>
  <svg style="left:1296px;top:5px" width="12" height="13" viewBox="0 0 12 13" fill="none" stroke="#9da5b4" stroke-width="1.1"><path d="M6 1 Q10 1 10 5.5 V9 L11.3 10.5 H0.7 L2 9 V5.5 Q2 1 6 1 Z M4.5 11.8 H7.5"/></svg>
</div>
</body></html>
